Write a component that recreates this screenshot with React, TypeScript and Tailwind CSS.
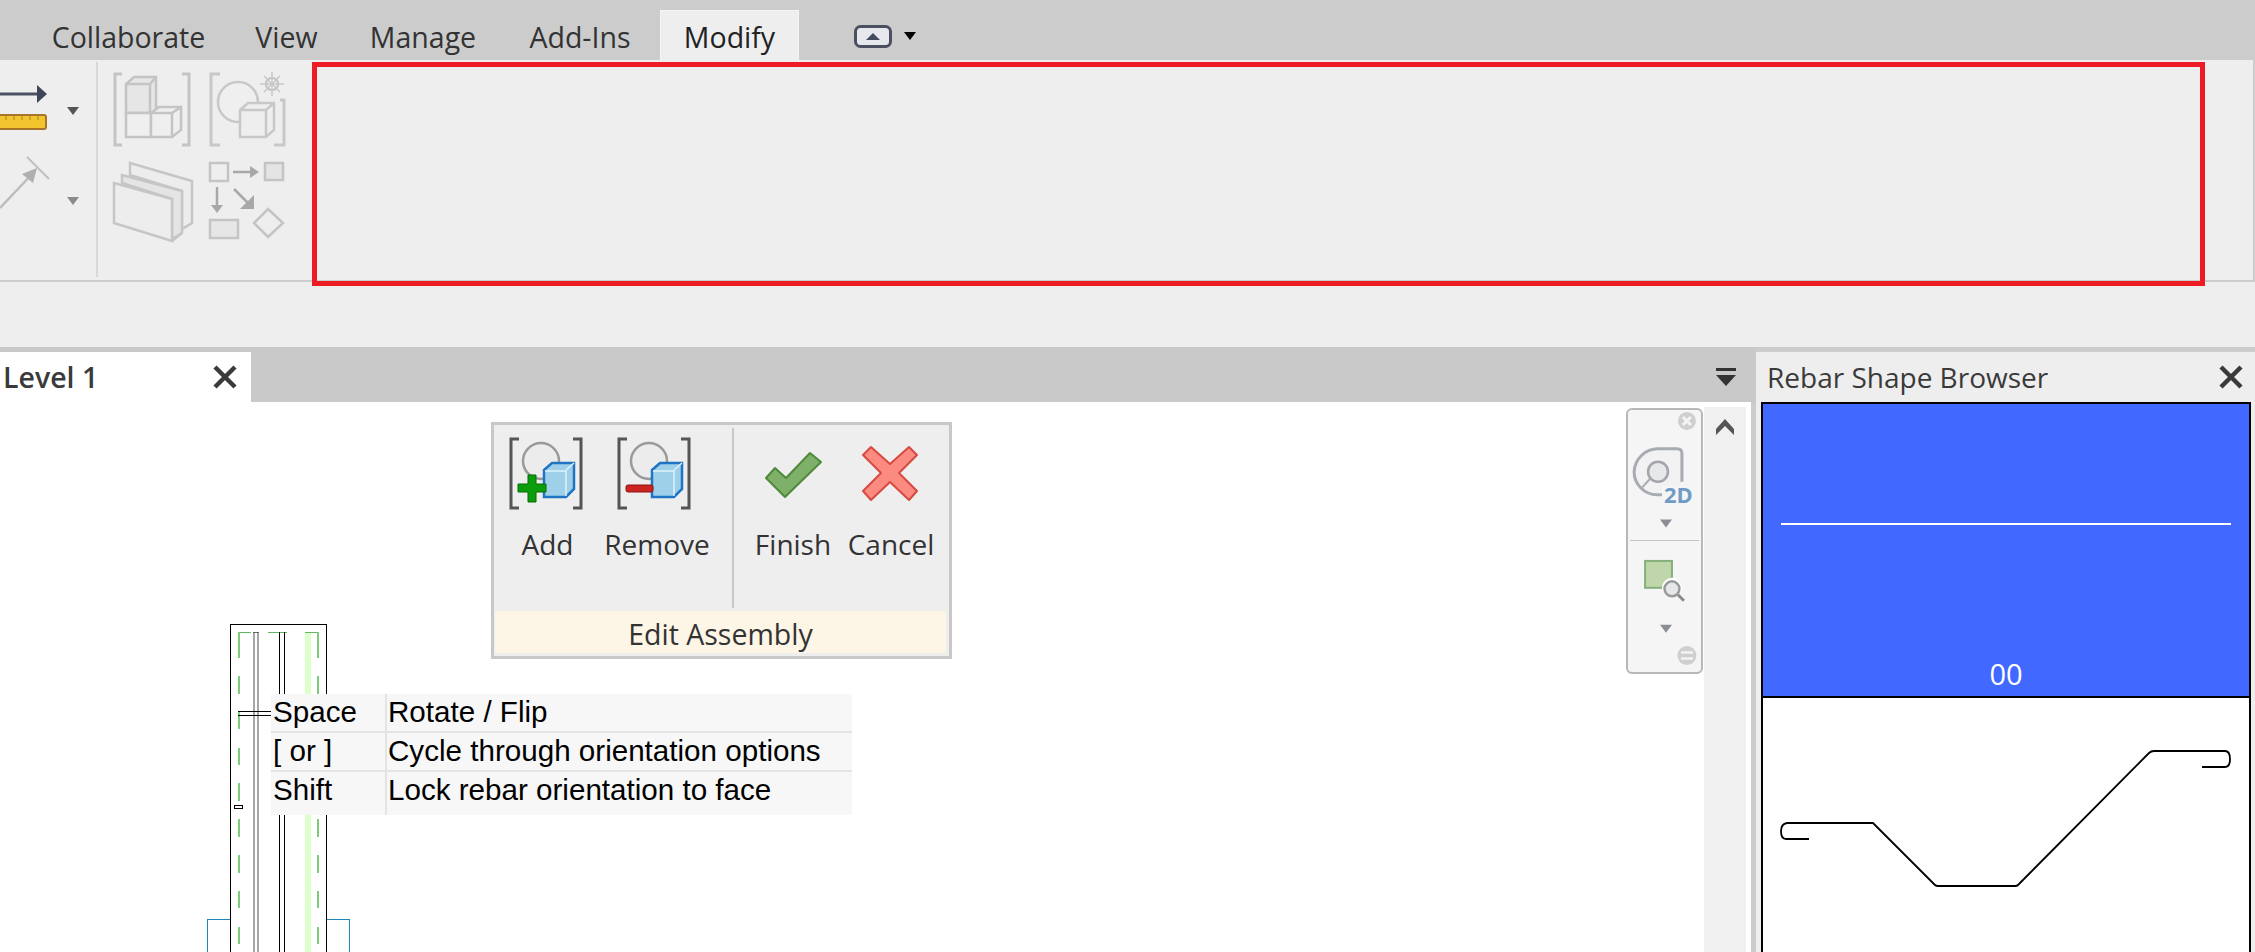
const TriangleDown = ({ color }: { color: string }) => (
  <svg width="12" height="8" viewBox="0 0 12 8">
    <path d="M0 0H12L6 8Z" fill={color} />
  </svg>
);

const CloseIcon = () => (
  <svg width="24" height="24" viewBox="0 0 24 24">
    <path d="M2 2L22 22M22 2L2 22" stroke="#3a3a3a" strokeWidth="4.5" fill="none" />
  </svg>
);

const tabs = [
  { label: "Collaborate", width: "w-[197px] ml-[30px]" },
  { label: "View", width: "w-[119px]" },
  { label: "Manage", width: "w-[154px]" },
  { label: "Add-Ins", width: "w-[160px]" },
];

const RibbonTabs = () => {
  return (
    <div className="flex h-[60px] items-stretch bg-[#cccccc] text-[28.5px] text-[#333333]">
      {tabs.map((tab) => (
        <div key={tab.label} className={`${tab.width} flex items-center justify-center pt-[14px]`}>
          {tab.label}
        </div>
      ))}
      <div className="mt-[10px] flex w-[139px] items-center justify-center border-x border-t border-[#f5f5f5] bg-[#eeeeee] pt-[4px] text-[#222222]">
        Modify
      </div>
      <div className="ml-[55px] flex items-center gap-[12px] pt-[12px]">
        <svg width="38" height="23" viewBox="0 0 38 23">
          <rect x="1.5" y="1.5" width="35" height="20" rx="5" fill="#e6e8ee" stroke="#4a5060" strokeWidth="3" />
          <path d="M12 15L19 8L26 15Z" fill="#444b5c" />
        </svg>
        <TriangleDown color="#000000" />
      </div>
    </div>
  );
};

const MeasureIcon = () => (
  <svg width="50" height="50" viewBox="0 0 50 50">
    <path d="M0 12H40" stroke="#4a5263" strokeWidth="3" />
    <path d="M37 3L47 12L37 21Z" fill="#3e4657" />
    <rect x="-4" y="33" width="50" height="14" rx="2" fill="#f2c52e" stroke="#a8742a" strokeWidth="2" />
    <path d="M6 33V38M14 33V38M22 33V38M30 33V38M38 33V38" stroke="#a8842a" strokeWidth="1" />
  </svg>
);

const AlignedDimIcon = () => (
  <svg width="50" height="68" viewBox="0 0 50 68">
    <path d="M0 56L34 20" stroke="#bcbcbc" strokeWidth="2.5" />
    <path d="M37 16L33 31L22 22Z" fill="#b0b0b0" />
    <path d="M27 5L49 27" stroke="#c0c0c0" strokeWidth="2" />
  </svg>
);

const AssemblyIcon = () => (
  <svg width="80" height="80" viewBox="0 0 80 80" fill="none" stroke="#c4c4c4" strokeWidth="2.5">
    <path d="M10 4H3V75H10M70 4H77V75H70" strokeWidth="3" />
    <path d="M14 43V14L22 7H44V43Z" fill="#e6e6e6" />
    <path d="M14 14H38V43M38 14L44 7" />
    <rect x="14" y="43" width="25" height="24" fill="#efefef" />
    <path d="M39 43L47 37H69V60L60 67H39Z" fill="#efefef" />
    <path d="M39 43H60V67M60 43L69 37" />
  </svg>
);

const CreateAssemblyIcon = () => (
  <svg width="82" height="80" viewBox="0 0 82 80" fill="none" stroke="#c8c8c8" strokeWidth="2.5">
    <path d="M12 4H3V75H12M72 30H76V75H66" strokeWidth="3" />
    <circle cx="30" cy="32" r="20" fill="#efefef" />
    <path d="M32 40L40 33H66V60L58 67H32Z" fill="#eeeeee" />
    <path d="M32 40H58V67M58 40L66 33" />
    <circle cx="64" cy="14" r="6" fill="#f4f4f4" />
    <path d="M64 2V26M52 14H76M56 6L72 22M72 6L56 22" strokeWidth="1.5" />
  </svg>
);

const PartsIcon = () => (
  <svg width="84" height="84" viewBox="0 0 84 84" fill="none" stroke="#c6c6c6" strokeWidth="2.5">
    <path d="M18 2L80 20V62L70 68V30L18 14Z" fill="#ededed" />
    <path d="M10 14L70 30V72L60 78V38L10 22Z" fill="#e4e4e4" />
    <path d="M2 22L60 38V80L2 62Z" fill="#ededed" />
    <path d="M60 80L70 72" />
  </svg>
);

const FlowIcon = () => (
  <svg width="80" height="84" viewBox="0 0 80 84" fill="none" stroke="#c4c4c4" strokeWidth="2.5">
    <rect x="2" y="2" width="18" height="18" fill="#eeeeee" />
    <path d="M25 11H42" stroke="#a8a8a8" strokeWidth="2.5" />
    <path d="M42 5L51 11L42 17Z" fill="#a8a8a8" stroke="none" />
    <rect x="57" y="2" width="18" height="17" fill="#e4e4e4" />
    <path d="M9 26V44" stroke="#a8a8a8" strokeWidth="2.5" />
    <path d="M3 44H15L9 52Z" fill="#a8a8a8" stroke="none" />
    <path d="M26 28L42 44" stroke="#a8a8a8" strokeWidth="2.5" />
    <path d="M46 34V48H32Z" fill="#a8a8a8" stroke="none" />
    <rect x="2" y="59" width="28" height="18" fill="#e6e6e6" />
    <path d="M60 48L75 62L60 76L46 62Z" fill="#eeeeee" />
  </svg>
);

const Ribbon = () => {
  return (
    <div className="flex h-[222px] border-r-2 border-b-2 border-[#cccccc] bg-[#eeeeee]">
      <div className="flex w-[96px] flex-col pt-[22px]">
        <div className="flex h-[70px] items-start justify-between pr-[17px]">
          <MeasureIcon />
          <div className="mt-[25px]">
            <TriangleDown color="#555555" />
          </div>
        </div>
        <div className="flex items-start justify-between pr-[17px]">
          <AlignedDimIcon />
          <div className="mt-[45px]">
            <TriangleDown color="#8a8a8a" />
          </div>
        </div>
      </div>
      <div className="mt-[2px] h-[215px] w-[2px] bg-[#d8d8d8]" />
      <div className="ml-[14px] grid grid-cols-[96px_96px] grid-rows-[91px_84px] pt-[10px]">
        <AssemblyIcon />
        <CreateAssemblyIcon />
        <PartsIcon />
        <FlowIcon />
      </div>
    </div>
  );
};

const AddRemoveCube = () => (
  <>
    <path d="M11 7H3V76H11M65 7H73V76H65" fill="none" stroke="#555555" strokeWidth="3" />
    <circle cx="33" cy="29" r="18" fill="#ececec" stroke="#9a9a9a" strokeWidth="2.5" />
    <path d="M36 38L44 31H66V57L58 65H36Z" fill="#9fd0ea" stroke="#1f74c4" strokeWidth="2.5" />
    <path d="M37 39H58V64M58 38L66 31" fill="none" stroke="#dff2fb" strokeWidth="1.5" />
  </>
);

const AddIcon = () => (
  <svg width="80" height="80" viewBox="0 0 80 80">
    <AddRemoveCube />
    <path
      d="M20 43H28V52H38V60H28V70H20V60H10V52H20Z"
      fill="#0a9e0a"
      stroke="#066b06"
      strokeWidth="1"
    />
  </svg>
);

const RemoveIcon = () => (
  <svg width="80" height="80" viewBox="0 0 80 80">
    <g transform="translate(-1 0)">
      <AddRemoveCube />
    </g>
    <rect x="9" y="53" width="27" height="7" rx="2" fill="#cc2420" stroke="#8f1512" strokeWidth="1" />
  </svg>
);

const CheckIcon = () => (
  <svg width="80" height="80" viewBox="0 0 80 80">
    <path
      d="M13 46L22 36L33 46L57 21L68 30L32 65Z"
      fill="#7fb069"
      stroke="#4e8a3c"
      strokeWidth="2"
      strokeLinejoin="round"
    />
  </svg>
);

const CancelIcon = () => (
  <svg width="80" height="80" viewBox="0 0 80 80">
    <path
      d="M20 15L39 32L58 15L66 23L48 41L66 59L58 68L39 50L20 68L12 59L30 41L12 23Z"
      fill="#fb8a80"
      stroke="#d64a42"
      strokeWidth="2"
      strokeLinejoin="round"
    />
  </svg>
);

const PanelButton = ({ label, width, children }: any) => (
  <div className={`${width} flex flex-col items-center pt-[7px]`}>
    {children}
    <div className="mt-[15px] text-[28px] leading-[34px] text-[#333333]">{label}</div>
  </div>
);

const EditAssemblyPanel = () => {
  return (
    <div className="absolute top-[20px] left-[491px] flex h-[237px] w-[461px] flex-col border-[3px] border-[#c8c8c8] bg-[#eeeeee] pr-[3px] pb-[2px] pl-[1px]">
      <div className="flex h-[186px]">
        <PanelButton label="Add" width="w-[105px]">
          <AddIcon />
        </PanelButton>
        <PanelButton label="Remove" width="w-[114px]">
          <RemoveIcon />
        </PanelButton>
        <div className="mt-[3px] ml-[18px] h-[180px] w-[2px] bg-[#c8c8c8]" />
        <div className="ml-[9px] flex">
          <PanelButton label="Finish" width="w-[100px]">
            <CheckIcon />
          </PanelButton>
          <PanelButton label="Cancel" width="w-[96px]">
            <CancelIcon />
          </PanelButton>
        </div>
      </div>
      <div className="flex h-[42px] items-center justify-center bg-[#fdf5e6] pt-[4px] text-[28.5px] text-[#333333]">
        Edit Assembly
      </div>
    </div>
  );
};

const shortcuts = [
  { key: "Space", action: "Rotate / Flip" },
  { key: "[ or ]", action: "Cycle through orientation options" },
  { key: "Shift", action: "Lock rebar orientation to face" },
];

const ShortcutTooltip = () => {
  return (
    <div className="absolute top-[292px] left-[271px] w-[581px] bg-[#f7f7f7] font-['Liberation_Sans',sans-serif] text-[29.6px] text-black">
      {shortcuts.map((row, index) => (
        <div
          key={row.key}
          className={
            index < 2
              ? "flex h-[39px] border-b-2 border-[#e4e4e4] leading-[36px]"
              : "flex h-[43px] leading-[36px]"
          }
        >
          <div className="w-[116px] border-r-2 border-[#e4e4e4] pl-[2px]">{row.key}</div>
          <div className="pl-[1px]">{row.action}</div>
        </div>
      ))}
    </div>
  );
};

const GREEN = "#7ccc7c";

const ColumnDrawing = () => (
  <svg
    className="absolute top-[218px] left-[200px]"
    width="160"
    height="332"
    viewBox="200 620 160 332"
    fill="none"
    shapeRendering="crispEdges"
  >
    <rect x="305" y="632" width="6" height="320" fill="#ddffcc" />
    <path d="M207.5 952V919.5H231M326 919.5H349.5V952" stroke="#1e88b8" strokeWidth="1" />
    <path d="M230.5 624V952M326.5 624V952M230.5 624.5H326.5" stroke="#000000" strokeWidth="1" />
    <path d="M239 632.5H251M268 632.5H287M305 632.5H319" stroke="#5fb85f" strokeWidth="1" />
    <path d="M239 632V658M318 632V658" stroke={GREEN} strokeWidth="2" />
    <path d="M239 676V952" stroke={GREEN} strokeWidth="2" strokeDasharray="17.5 18.3" />
    <path d="M318 676V952" stroke={GREEN} strokeWidth="2" strokeDasharray="17.5 18.3" />
    <path d="M254 632V952M258 632V952" stroke="#a6a6a6" strokeWidth="2" />
    <path d="M253 632.5H259" stroke="#666666" strokeWidth="1" />
    <path d="M279.5 632V952M284.5 632V952" stroke="#000000" strokeWidth="1" />
    <path d="M238 711.5H272M238 715.5H272" stroke="#000000" strokeWidth="1" />
    <rect x="234.5" y="805.5" width="8" height="3" fill="#ffffff" stroke="#000000" strokeWidth="1" />
  </svg>
);

const NavBar = () => {
  return (
    <div className="absolute top-[6px] left-[1626px] flex h-[266px] w-[77px] flex-col rounded-[6px] border-2 border-[#b8b8b8] bg-[#f5f5f5]">
      <svg width="73" height="130" viewBox="0 0 73 130">
        <circle cx="59" cy="11" r="9" fill="#cfcfcf" />
        <path d="M55 7L63 15M63 7L55 15" stroke="#f4f4f4" strokeWidth="3" />
        <path
          d="M54 72V44Q54 39 49 39H30A24 24 0 0 0 6 62A23 23 0 0 0 29 85H40"
          fill="#f2f2f2"
          stroke="#a8abb2"
          strokeWidth="3"
        />
        <circle cx="30" cy="62" r="10" fill="#e6e8ea" stroke="#a2a5ab" strokeWidth="2.5" />
        <path d="M22 69L14 78" stroke="#a8abb2" strokeWidth="2" />
        <rect x="34" y="76" width="32" height="20" fill="#f5f5f5" />
        <text
          x="36"
          y="93"
          fontFamily="'Open Sans', sans-serif"
          fontWeight="700"
          fontSize="22"
          fill="#6f9cc6"
        >
          2D
        </text>
        <path d="M32 110H44L38 118Z" fill="#8b8e96" />
      </svg>
      <div className="mx-[2px] h-[1px] bg-[#c4c4c4]" />
      <svg width="73" height="132" viewBox="0 0 73 132">
        <rect x="17" y="20" width="27" height="27" fill="#bfd6ab" stroke="#85b07a" strokeWidth="2" />
        <circle cx="44" cy="47" r="10" fill="#ffffff" />
        <circle cx="44" cy="48" r="7.5" fill="#e4e8ea" stroke="#9a9a9a" strokeWidth="2.5" />
        <path d="M50 54L56 60" stroke="#8a8a8a" strokeWidth="3" />
        <path d="M32 84H44L38 92Z" fill="#8b8e96" />
        <circle cx="59" cy="115" r="9.5" fill="#cfcfcf" />
        <path d="M53 112H65M53 118H65" stroke="#f4f4f4" strokeWidth="2.5" />
      </svg>
    </div>
  );
};

const RebarShapeBrowser = () => {
  return (
    <div className="flex w-[499px] flex-col bg-[#eeeeee]">
      <div className="h-[5px] bg-[#cccccc]" />
      <div className="flex h-[50px] items-center justify-between pr-[12px] pl-[11px] text-[28px] text-[#3a3a3a]">
        <span>Rebar Shape Browser</span>
        <CloseIcon />
      </div>
      <div className="flex min-h-0 flex-1 flex-col pr-[4px] pl-[5px]">
        <div className="relative flex h-[296px] flex-col items-center border-2 border-black bg-[#4169ff]">
          <div className="mx-[18px] mt-[119px] h-[2px] self-stretch bg-white" />
          <div className="mt-[134px] text-[29px] leading-[30px] text-white">00</div>
        </div>
        <div className="flex-1 border-x-2 border-black bg-white">
          <svg width="487" height="249" viewBox="1763 698 487 249" fill="none">
            <path
              d="M2202 767H2225Q2230 767 2230 759Q2230 751 2225 751H2154Q2151 751 2149 753L2018 885Q2017 886 2015 886H1938Q1936 886 1935 885L1873 823H1787Q1781 824 1781 831Q1781 839 1786 839H1809"
              stroke="#000000"
              strokeWidth="1.8"
            />
          </svg>
        </div>
      </div>
    </div>
  );
};

const ViewArea = () => {
  return (
    <div className="flex min-h-0 flex-1">
      <div className="flex min-w-0 flex-1 flex-col">
        <div className="flex h-[55px] items-end justify-between bg-[#c9c9c9]">
          <div className="flex h-[50px] w-[251px] items-center justify-between bg-white pr-[14px] pl-[3px] text-[28.5px] font-semibold text-[#3a3a3a]">
            <span>Level 1</span>
            <CloseIcon />
          </div>
          <svg className="mr-[20px] mb-[15px]" width="20" height="19" viewBox="0 0 20 19">
            <path d="M0 1.5H20" stroke="#333333" strokeWidth="3" />
            <path d="M0 7H20L10 18Z" fill="#333333" />
          </svg>
        </div>
        <div className="relative flex min-h-0 flex-1 justify-end bg-white">
          <ColumnDrawing />
          <div className="flex w-[47px] flex-col pt-[5px]">
            <div className="flex w-[42px] flex-1 justify-center bg-[#f0f0f0] pt-[12px]">
              <svg width="18" height="16" viewBox="0 0 18 16">
                <path d="M0 10L9 0L18 10V16L9 7L0 16Z" fill="#555555" />
              </svg>
            </div>
          </div>
          <div className="w-[5px] bg-[#cccccc]" />
          <EditAssemblyPanel />
          <ShortcutTooltip />
          <NavBar />
        </div>
      </div>
      <RebarShapeBrowser />
    </div>
  );
};

const App = () => {
  return (
    <div className="relative flex h-[952px] w-[2255px] flex-col overflow-hidden bg-[#eeeeee] font-['Open_Sans',sans-serif]">
      <RibbonTabs />
      <Ribbon />
      <div className="h-[65px] bg-[#eeeeee]" />
      <ViewArea />
      <div className="absolute top-[62px] left-[312px] h-[224px] w-[1893px] border-[5px] border-[#ed1c24]" />
    </div>
  );
};

export default App;
